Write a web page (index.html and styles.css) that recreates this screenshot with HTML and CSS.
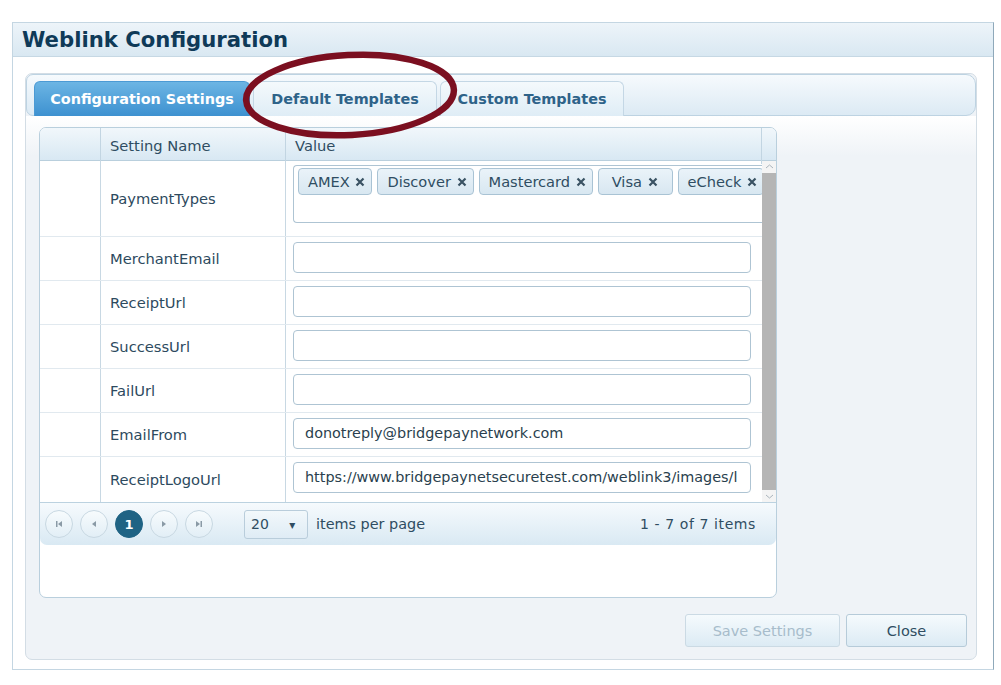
FILE: index.html
```html
<!DOCTYPE html>
<html lang="en">
<head>
  <meta charset="UTF-8">
  <title>Weblink Configuration</title>
  <link rel="stylesheet" href="styles.css">
</head>
<body>
  <div class="window">
    <div class="titlebar">
      <h1>Weblink Configuration</h1>
    </div>
    <div class="window-body">
      <div class="tabstrip">
        <ul class="tabs">
          <li class="tab active">Configuration Settings</li>
          <li class="tab">Default Templates</li>
          <li class="tab">Custom Templates</li>
        </ul>
        <div class="tab-content">
          <div class="grid">
            <div class="grid-head">
              <div class="cell"></div>
              <div class="cell">Setting Name</div>
              <div class="cell">Value</div>
              <div class="cell"></div>
            </div>
            <div class="grid-body">
              <div class="rows">
                <div class="row tall">
                  <div class="cell"></div>
                  <div class="cell name">PaymentTypes</div>
                  <div class="cell value">
                    <div class="multiselect">
                      <span class="tag">AMEX <svg class="x" width="10" height="10" viewBox="0 0 10 10"><path d="M1.5 1.5 L8.5 8.5 M8.5 1.5 L1.5 8.5" stroke="#3a5263" stroke-width="2.2"/></svg></span>
                      <span class="tag">Discover <svg class="x" width="10" height="10" viewBox="0 0 10 10"><path d="M1.5 1.5 L8.5 8.5 M8.5 1.5 L1.5 8.5" stroke="#3a5263" stroke-width="2.2"/></svg></span>
                      <span class="tag">Mastercard <svg class="x" width="10" height="10" viewBox="0 0 10 10"><path d="M1.5 1.5 L8.5 8.5 M8.5 1.5 L1.5 8.5" stroke="#3a5263" stroke-width="2.2"/></svg></span>
                      <span class="tag wide">Visa <svg class="x" width="10" height="10" viewBox="0 0 10 10"><path d="M1.5 1.5 L8.5 8.5 M8.5 1.5 L1.5 8.5" stroke="#3a5263" stroke-width="2.2"/></svg></span>
                      <span class="tag">eCheck <svg class="x" width="10" height="10" viewBox="0 0 10 10"><path d="M1.5 1.5 L8.5 8.5 M8.5 1.5 L1.5 8.5" stroke="#3a5263" stroke-width="2.2"/></svg></span>
                    </div>
                  </div>
                </div>
                <div class="row">
                  <div class="cell"></div>
                  <div class="cell name">MerchantEmail</div>
                  <div class="cell value"><div class="input"></div></div>
                </div>
                <div class="row">
                  <div class="cell"></div>
                  <div class="cell name">ReceiptUrl</div>
                  <div class="cell value"><div class="input"></div></div>
                </div>
                <div class="row">
                  <div class="cell"></div>
                  <div class="cell name">SuccessUrl</div>
                  <div class="cell value"><div class="input"></div></div>
                </div>
                <div class="row">
                  <div class="cell"></div>
                  <div class="cell name">FailUrl</div>
                  <div class="cell value"><div class="input"></div></div>
                </div>
                <div class="row">
                  <div class="cell"></div>
                  <div class="cell name">EmailFrom</div>
                  <div class="cell value"><div class="input">donotreply@bridgepaynetwork.com</div></div>
                </div>
                <div class="row last">
                  <div class="cell"></div>
                  <div class="cell name">ReceiptLogoUrl</div>
                  <div class="cell value"><div class="input">https://www.bridgepaynetsecuretest.com/weblink3/images/l</div></div>
                </div>
              </div>
              <div class="scrollbar">
                <svg class="arrow" width="9" height="10" viewBox="0 0 9 10"><path d="M1 6 L4.5 3 L8 6" fill="none" stroke="#aab4bc" stroke-width="1"/></svg>
                <div class="thumb"></div>
                <svg class="arrow" width="9" height="10" viewBox="0 0 9 10"><path d="M1 4 L4.5 7 L8 4" fill="none" stroke="#aab4bc" stroke-width="1"/></svg>
              </div>
            </div>
            <div class="pager">
              <span class="page-btn">
                <svg width="10" height="10" viewBox="0 0 10 10"><rect x="2" y="2" width="1.5" height="6" fill="#8a9aa6"/><path d="M8 2 L4 5 L8 8 Z" fill="#8a9aa6"/></svg>
              </span>
              <span class="page-btn">
                <svg width="10" height="10" viewBox="0 0 10 10"><path d="M7 2 L3 5 L7 8 Z" fill="#8a9aa6"/></svg>
              </span>
              <span class="page-btn current">1</span>
              <span class="page-btn">
                <svg width="10" height="10" viewBox="0 0 10 10"><path d="M3 2 L7 5 L3 8 Z" fill="#8a9aa6"/></svg>
              </span>
              <span class="page-btn">
                <svg width="10" height="10" viewBox="0 0 10 10"><path d="M2 2 L6 5 L2 8 Z" fill="#8a9aa6"/><rect x="6.5" y="2" width="1.5" height="6" fill="#8a9aa6"/></svg>
              </span>
              <span class="page-size">20 <span class="caret">&#x25BE;</span></span>
              <span class="per-page">items per page</span>
              <span class="info">1 - 7 of 7 items</span>
            </div>
          </div>
          <div class="actions">
            <button class="btn" disabled>Save Settings</button>
            <button class="btn close">Close</button>
          </div>
        </div>
      </div>
    </div>
  </div>

  <!-- hand-drawn highlight round the second tab -->
  <svg class="circle-mark" width="230" height="96" viewBox="0 0 230 96">
    <ellipse cx="114" cy="45" rx="104" ry="40" fill="none" stroke="#7b0f20" stroke-width="6.5" transform="rotate(-3 114 45)"/>
  </svg>
</body>
</html>
```

FILE: styles.css
```css
body {
  margin: 0;
  background: white;
  font-family: "DejaVu Sans", Verdana, sans-serif;
  color: #2d4a5e;
}
.window {
  margin: 22px 0 0 12px;
  width: 982px;
  height: 648px;
  border: 1px solid #c4d6e2;
  border-right-color: #8fa9ba;
  background: white;
  box-sizing: border-box;
}
.titlebar {
  height: 34px;
  background: linear-gradient(#edf4f9, #d9e8f2);
  border-bottom: 1px solid #c6d8e4;
  box-sizing: border-box;
  padding-left: 9px;
}
.titlebar h1 {
  margin: 0;
  font-size: 21.2px;
  line-height: 34px;
  color: #0f3a58;
  font-weight: bold;
}
.window-body {
  padding: 16px 16px 0 12px;
}
.tabstrip {
  height: 587px;
  border: 1px solid #d3dde5;
  border-radius: 7px;
  background: #eff3f7;
  box-sizing: border-box;
}
.tabs {
  display: flex;
  gap: 3px;
  margin: 0;
  padding: 6px 0 0 7px;
  list-style: none;
  height: 42px;
  box-sizing: border-box;
  background: linear-gradient(#f6fafd, #dceaf4);
  border: 1px solid #bdd3e2;
  border-radius: 7px 10px 10px 7px;
}
.tab {
  width: 184px;
  height: 35px;
  box-sizing: border-box;
  border: 1px solid #c4d7e5;
  border-bottom: none;
  border-radius: 6px 6px 0 0;
  background: linear-gradient(#f4f9fc, #dfedf6);
  font-weight: bold;
  font-size: 14.4px;
  line-height: 34px;
  color: #2e6389;
  text-align: center;
  white-space: nowrap;
}
.tab.active {
  width: 216px;
  background: linear-gradient(#6cb5e4, #3d91d0);
  border-color: #4b9ad4;
  color: white;
}
.tab-content {
  padding: 11px 0 0 13px;
  background: linear-gradient(white, #eff3f7 40px);
  border-radius: 0 0 7px 7px;
}
.grid {
  width: 738px;
  height: 471px;
  box-sizing: border-box;
  border: 1px solid #b9cfdd;
  border-radius: 7px;
  background: white;
  overflow: hidden;
  font-size: 14.7px;
}
.grid-head {
  display: grid;
  grid-template-columns: 61px 185px 476px 1fr;
  height: 33px;
  box-sizing: border-box;
  background: linear-gradient(#f1f7fb, #d8e8f3);
  border-bottom: 1px solid #b9cfdd;
}
.grid-head .cell {
  border-right: 1px solid #c2d5e2;
  line-height: 36px;
  padding-left: 9px;
  color: #2f4d62;
}
.grid-head .cell:last-child {
  border-right: none;
}
.grid-body {
  display: flex;
  height: 341px;
}
.rows {
  width: 722px;
}
.row {
  display: grid;
  grid-template-columns: 61px 185px 476px;
  height: 44px;
  border-bottom: 1px solid #e1e9ef;
  box-sizing: border-box;
}
.row.tall {
  height: 76px;
}
.row.last {
  height: 45px;
  border-bottom: none;
}
.row .cell {
  border-right: 1px solid #c8d8e3;
  display: flex;
  align-items: center;
}
.row .cell:last-child {
  border-right: none;
}
.name {
  padding-left: 9px;
}
.row .value {
  padding: 5px 0 0 7px;
  align-items: flex-start;
  overflow: hidden;
}
.row.tall .value {
  padding-top: 4px;
}
.input {
  width: 458px;
  height: 31px;
  box-sizing: border-box;
  border: 1px solid #aec4d3;
  border-radius: 4px;
  padding-left: 11px;
  line-height: 29px;
  font-size: 14.4px;
  white-space: nowrap;
  overflow: hidden;
  color: #2a3f4e;
}
.multiselect {
  width: 480px;
  height: 58px;
  box-sizing: border-box;
  border: 1px solid #aec4d3;
  border-right: none;
  border-radius: 4px 0 0 4px;
  padding: 2px 0 0 4px;
  display: flex;
  gap: 5px;
  white-space: nowrap;
}
.tag {
  height: 27px;
  box-sizing: border-box;
  padding: 0 6px 0 9px;
  border: 1px solid #a9c3d4;
  border-radius: 4px;
  background: linear-gradient(#eaf3f9, #d8e7f1);
  line-height: 25px;
  font-size: 14.6px;
  color: #2f4d62;
}
.tag.wide {
  padding: 0 14px 0 13px;
}
.tag .x {
  margin-left: 1px;
}
.scrollbar {
  width: 15px;
  display: flex;
  flex-direction: column;
  align-items: center;
  background: #f4f4f4;
}
.scrollbar .arrow {
  flex: none;
  margin: 1px 0;
}
.thumb {
  flex: 1;
  width: 15px;
  background: #b5b5b5;
}
.pager {
  height: 43px;
  display: flex;
  align-items: center;
  padding: 0 20px 0 5px;
  background: linear-gradient(#f6fafd, #d9e9f3);
  border-top: 1px solid #bcd2e0;
  border-radius: 0 0 7px 7px;
  box-sizing: border-box;
  color: #2f4d62;
  font-size: 14px;
}
.page-btn {
  width: 28px;
  height: 28px;
  box-sizing: border-box;
  border: 1px solid #c8d8e2;
  border-radius: 50%;
  background: linear-gradient(#f7fbfd, #e2eef6);
  display: flex;
  align-items: center;
  justify-content: center;
  margin-right: 7px;
}
.page-btn.current {
  background: #1f6384;
  border-color: #1f6384;
  color: white;
  font-weight: bold;
  font-size: 13px;
}
.page-size {
  margin-left: 24px;
  width: 64px;
  height: 29px;
  box-sizing: border-box;
  border: 1px solid #b9cddb;
  border-radius: 3px;
  background: linear-gradient(#f2f8fb, #dfecf5);
  padding-left: 6px;
  line-height: 27px;
}
.caret {
  margin-left: 16px;
  font-size: 12px;
}
.per-page {
  margin-left: 8px;
  font-size: 14.4px;
}
.info {
  margin-left: auto;
  letter-spacing: 0.6px;
}
.actions {
  display: flex;
  justify-content: flex-end;
  gap: 6px;
  margin-top: 16px;
  padding-right: 9px;
}
.btn {
  height: 33px;
  border: 1px solid #b6cbd9;
  border-radius: 3px;
  background: linear-gradient(#f5fafd, #dcebf4);
  font-family: "DejaVu Sans", Verdana, sans-serif;
  font-size: 14.5px;
  color: #2f4d62;
}
.btn[disabled] {
  width: 155px;
  color: #a7bccb;
  border-color: #cbdae4;
}
.btn.close {
  width: 121px;
}
.circle-mark {
  position: absolute;
  left: 236px;
  top: 50px;
}
```
